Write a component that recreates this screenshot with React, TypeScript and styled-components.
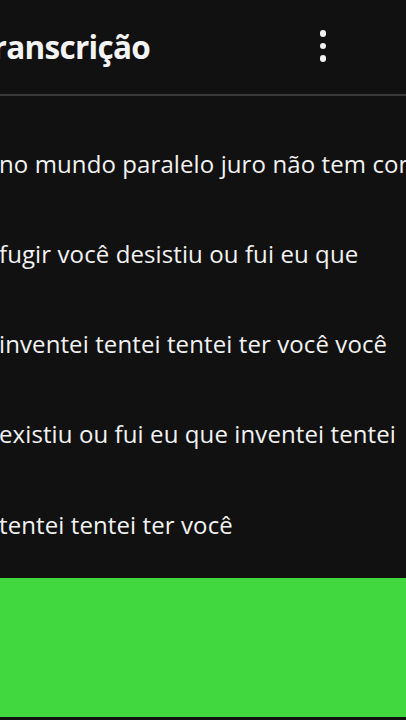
import styled, { createGlobalStyle } from 'styled-components'


const Global = createGlobalStyle`
    html, body{
        margin: 0;
        padding: 0;
        background: #111111;
    }
    body{
        font-family: "Open Sans", "Noto Sans", sans-serif;
        overflow: hidden;
    }
`

const Screen = styled.div`
    width: 406px;
    height: 720px;
    background: #111111;
    display: flex;
    flex-direction: column;
    overflow: hidden;
`

const Header = styled.header`
    height: 94px;
    display: flex;
    align-items: center;
    border-bottom: 2px solid #3a3a3a;
    flex-shrink: 0;
`

const Title = styled.h1`
    flex: 1;
    margin: 0 0 0 -25px;
    padding-bottom: 2px;
    color: #f4f4f4;
    font-size: 31.5px;
    font-weight: 700;
    letter-spacing: -0.7px;
    white-space: nowrap;
`

const MenuButton = styled.div`
    width: 20px;
    display: flex;
    flex-direction: column;
    align-items: center;
    gap: 6px;
    margin-right: 73px;
    margin-bottom: 2px;

    span{
        width: 6.5px;
        height: 6.5px;
        border-radius: 50%;
        background: #f2f2f2;
    }
`

const Lines = styled.div`
    padding-top: 22px;
    display: flex;
    flex-direction: column;
`

const Line = styled.div`
    height: 90.25px;
    display: flex;
    align-items: center;
    padding-left: 0;
    margin-left: -1px;
    color: #f2f2f2;
    font-size: 24px;
    font-weight: 500;
    letter-spacing: 0.1px;
    white-space: nowrap;
`

const GreenBlock = styled.div`
    margin-top: 9px;
    height: 139px;
    background: #40d83e;
`


const lyrics = [
    'no mundo paralelo juro não tem com',
    'fugir você desistiu ou fui eu que',
    'inventei tentei tentei ter você você',
    'existiu ou fui eu que inventei tentei',
    'tentei tentei ter você',
]


const App = ()=>{
    return(
        <Screen>
            <Global />
            <Header>
                <Title>Transcrição</Title>
                <MenuButton>
                    <span />
                    <span />
                    <span />
                </MenuButton>
            </Header>
            <Lines>
                {lyrics.map((l, i)=> <Line key={i}>{l}</Line>)}
            </Lines>
            <GreenBlock />
        </Screen>
    )
}

export default App
